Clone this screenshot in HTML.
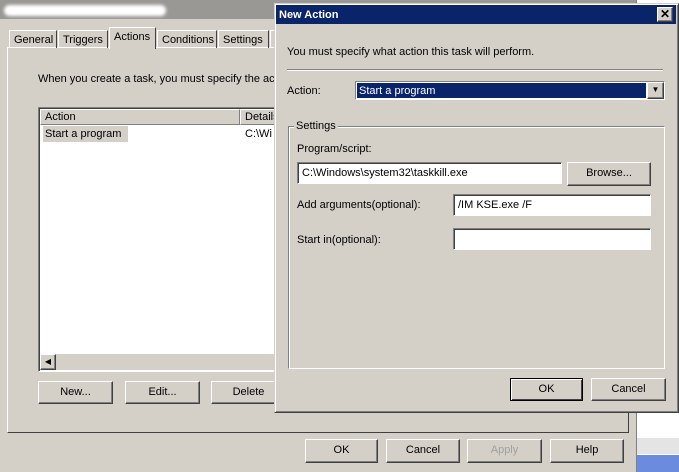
<!DOCTYPE html>
<html><head><style>
*{box-sizing:border-box;margin:0;padding:0}
body{width:679px;height:472px;position:relative;overflow:hidden;background:#d4d0c8;font-family:"Liberation Sans",sans-serif;font-size:11px;color:#000}
.a{position:absolute}
.btn{position:absolute;background:#d4d0c8;border:1px solid;border-color:#fff #404040 #404040 #fff;box-shadow:inset -1px -1px 0 #808080;text-align:center;line-height:21px}
.inp{position:absolute;background:#fff;border:1px solid;border-color:#808080 #fff #fff #808080;box-shadow:inset 1px 1px 0 #404040;padding-left:4px;line-height:18px}
.tab{position:absolute;top:30px;height:18px;border:1px solid;border-bottom:none;border-color:#fff #404040 #fff #fff;padding:0 4px;line-height:18px}
</style></head><body>
<div class="a" style="left:0;top:0;width:679px;height:19px;background:#9a9894"></div>
<div class="a" style="left:4px;top:5px;width:162px;height:11px;background:#fff;border-radius:6px;filter:blur(1.5px)"></div>
<div class="a" style="left:636px;top:0;width:43px;height:472px;background:#fff;border-left:1px solid #808080"></div>
<div class="a" style="left:637px;top:438px;width:42px;height:16px;background:#e4e4e4"></div>
<div class="a" style="left:637px;top:455px;width:42px;height:17px;background:#6a8bde"></div>
<div class="a" style="left:0;top:19px;width:636px;height:453px;background:#d4d0c8"></div>
<div class="a" style="left:7px;top:47px;width:622px;height:386px;border:1px solid;border-color:#fff #404040 #404040 #fff"></div>
<div class="tab" style="left:9px;width:48px">General</div>
<div class="tab" style="left:58px;width:50px">Triggers</div>
<div class="tab" style="left:109px;top:27px;height:22px;width:47px;background:#d4d0c8;line-height:18px">Actions</div>
<div class="tab" style="left:157px;width:60px">Conditions</div>
<div class="tab" style="left:218px;width:51px">Settings</div>
<div class="tab" style="left:270px;width:20px"></div>
<div class="a" style="left:38px;top:73px">When you create a task, you must specify the action that will occur</div>
<div class="a" style="left:38px;top:107px;width:250px;height:265px;background:#fff;border:1px solid;border-color:#808080 #fff #fff #808080;box-shadow:inset 1px 1px 0 #404040"></div>
<div class="a" style="left:40px;top:109px;width:200px;height:16px;border:1px solid;border-color:#fff #808080 #808080 #fff;background:#d4d0c8;padding-left:4px;line-height:15px">Action</div>
<div class="a" style="left:240px;top:109px;width:48px;height:16px;border:1px solid;border-color:#fff #808080 #808080 #fff;background:#d4d0c8;padding-left:4px;line-height:15px">Details</div>
<div class="a" style="left:43px;top:126px;width:85px;height:16px;background:#d4d0c8;padding-left:2px;line-height:17px">Start a program</div>
<div class="a" style="left:245px;top:126px;line-height:17px">C:\Wi</div>
<div class="a" style="left:40px;top:354px;width:248px;height:16px;background:#d4d0c8"></div>
<div class="btn" style="left:40px;top:354px;width:16px;height:16px;line-height:13px;font-size:8px">◀</div>
<div class="btn" style="left:38px;top:381px;width:75px;height:23px">New...</div>
<div class="btn" style="left:125px;top:381px;width:75px;height:23px">Edit...</div>
<div class="btn" style="left:211px;top:381px;width:75px;height:23px">Delete</div>
<div class="btn" style="left:305px;top:439px;width:73px;height:24px">OK</div>
<div class="btn" style="left:386px;top:439px;width:74px;height:24px">Cancel</div>
<div class="btn" style="left:467px;top:439px;width:75px;height:24px;color:#a0a0a0">Apply</div>
<div class="btn" style="left:550px;top:439px;width:74px;height:24px">Help</div>
<div class="a" style="left:274px;top:3px;width:405px;height:410px;background:#d4d0c8;border:1px solid;border-color:#d4d0c8 #404040 #404040 #d4d0c8;box-shadow:inset 1px 1px 0 #fff,inset -1px -1px 0 #808080"></div>
<div class="a" style="left:276px;top:5px;width:400px;height:19px;background:#0a246a;color:#fff;font-weight:bold;padding-left:3px;line-height:20px;font-size:11px">New Action</div>
<div class="btn" style="left:657px;top:7px;width:16px;height:15px;line-height:12px;font-size:12px;font-weight:bold">✕</div>
<div class="a" style="left:287px;top:46px">You must specify what action this task will perform.</div>
<div class="a" style="left:287px;top:69px;width:376px;height:2px;border-top:1px solid #808080;border-bottom:1px solid #fff"></div>
<div class="a" style="left:287px;top:85px">Action:</div>
<div class="a" style="left:355px;top:81px;width:310px;height:19px;border:1px solid;border-color:#808080 #fff #fff #808080;background:#fff"></div>
<div class="a" style="left:357px;top:83px;width:289px;height:15px;background:#0a246a;color:#fff;padding-left:2px;line-height:16px">Start a program</div>
<div class="btn" style="left:647px;top:82px;width:17px;height:17px;line-height:14px;font-size:8px">▼</div>
<div class="a" style="left:288px;top:126px;width:377px;height:243px;border:1px solid;border-color:#808080 #fff #fff #808080;box-shadow:inset 1px 1px 0 #fff,1px 1px 0 #808080 inset"></div>
<div class="a" style="left:294px;top:120px;background:#d4d0c8;padding:0 2px">Settings</div>
<div class="a" style="left:297px;top:143px">Program/script:</div>
<div class="inp" style="left:297px;top:162px;width:265px;height:22px;line-height:20px">C:\Windows\system32\taskkill.exe</div>
<div class="btn" style="left:567px;top:162px;width:84px;height:24px">Browse...</div>
<div class="a" style="left:297px;top:199px">Add arguments(optional):</div>
<div class="inp" style="left:453px;top:194px;width:198px;height:22px;line-height:20px">/IM KSE.exe /F</div>
<div class="a" style="left:297px;top:234px">Start in(optional):</div>
<div class="inp" style="left:453px;top:228px;width:198px;height:22px"></div>
<div class="btn" style="left:510px;top:378px;width:73px;height:23px;border:1px solid #000;box-shadow:inset 1px 1px 0 #fff,inset -1px -1px 0 #404040">OK</div>
<div class="btn" style="left:591px;top:378px;width:75px;height:23px">Cancel</div>
</body></html>
